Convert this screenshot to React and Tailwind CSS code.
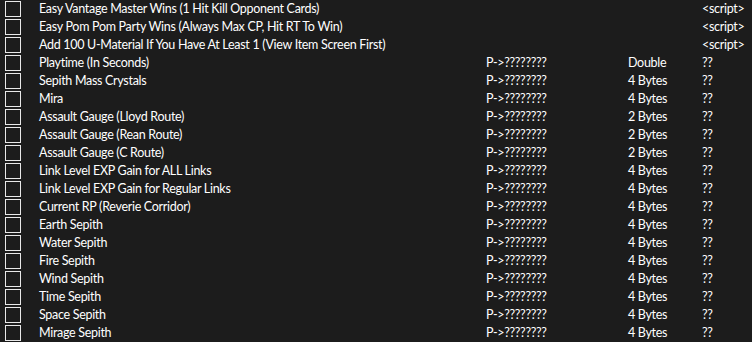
import React from "react";

const rows = [
  ["Easy Vantage Master Wins (1 Hit Kill Opponent Cards)", "", "", "<script>"],
  ["Easy Pom Pom Party Wins (Always Max CP, Hit RT To Win)", "", "", "<script>"],
  ["Add 100 U-Material If You Have At Least 1 (View Item Screen First)", "", "", "<script>"],
  ["Playtime (In Seconds)", "P->????????", "Double", "??"],
  ["Sepith Mass Crystals", "P->????????", "4 Bytes", "??"],
  ["Mira", "P->????????", "4 Bytes", "??"],
  ["Assault Gauge (Lloyd Route)", "P->????????", "2 Bytes", "??"],
  ["Assault Gauge (Rean Route)", "P->????????", "2 Bytes", "??"],
  ["Assault Gauge (C Route)", "P->????????", "2 Bytes", "??"],
  ["Link Level EXP Gain for ALL Links", "P->????????", "4 Bytes", "??"],
  ["Link Level EXP Gain for Regular Links", "P->????????", "4 Bytes", "??"],
  ["Current RP (Reverie Corridor)", "P->????????", "4 Bytes", "??"],
  ["Earth Sepith", "P->????????", "4 Bytes", "??"],
  ["Water Sepith", "P->????????", "4 Bytes", "??"],
  ["Fire Sepith", "P->????????", "4 Bytes", "??"],
  ["Wind Sepith", "P->????????", "4 Bytes", "??"],
  ["Time Sepith", "P->????????", "4 Bytes", "??"],
  ["Space Sepith", "P->????????", "4 Bytes", "??"],
  ["Mirage Sepith", "P->????????", "4 Bytes", "??"],
];

export default function App() {
  return (
    <div
      className="w-[752px] h-[342px] bg-[#1c1c1c] text-white overflow-hidden text-[12.5px] tracking-[-0.3px] leading-none"
      style={{ fontFamily: 'Lato, "Noto Sans", sans-serif' }}
    >
      {rows.map((r, i) => (
        <div key={i} className="flex h-[18px] items-center">
          <div className="w-[39px] pl-[5px] flex items-center">
            <div className="w-[16px] h-[16px] border border-[#e8e8e8]" />
          </div>
          <div className="w-[447px] whitespace-nowrap">{r[0]}</div>
          <div className="w-[142px] whitespace-nowrap">{r[1]}</div>
          <div className="w-[74px] whitespace-nowrap">{r[2]}</div>
          <div className="whitespace-nowrap">{r[3]}</div>
        </div>
      ))}
    </div>
  );
}
